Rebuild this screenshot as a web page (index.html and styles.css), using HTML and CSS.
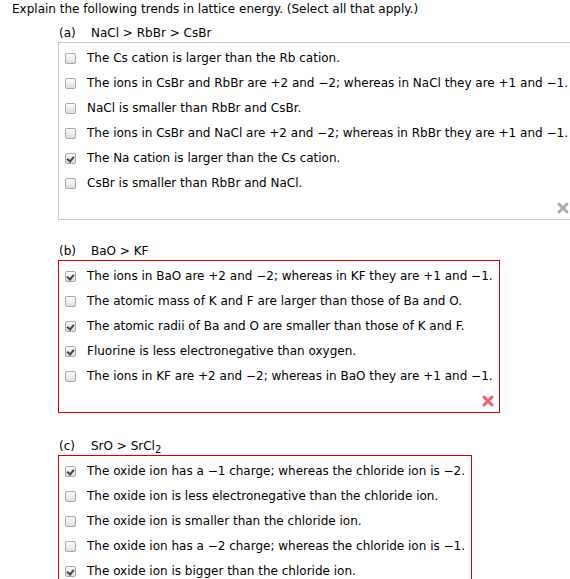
FILE: index.html
```html
<!DOCTYPE html>
<html>
<head>
<meta charset="utf-8">
<link rel="stylesheet" href="styles.css">
</head>
<body>
<div class="page">
  <div class="title">Explain the following trends in lattice energy. (Select all that apply.)</div>

  <div class="part">
    <div class="label"><span class="letter">(a)</span><span>NaCl &gt; RbBr &gt; CsBr</span></div>
    <div class="box neutral">
      <div class="row"><span class="cb"></span><span>The Cs cation is larger than the Rb cation.</span></div>
      <div class="row"><span class="cb"></span><span>The ions in CsBr and RbBr are +2 and &minus;2; whereas in NaCl they are +1 and &minus;1.</span></div>
      <div class="row"><span class="cb"></span><span>NaCl is smaller than RbBr and CsBr.</span></div>
      <div class="row"><span class="cb"></span><span>The ions in CsBr and NaCl are +2 and &minus;2; whereas in RbBr they are +1 and &minus;1.</span></div>
      <div class="row"><span class="cb checked"></span><span>The Na cation is larger than the Cs cation.</span></div>
      <div class="row"><span class="cb"></span><span>CsBr is smaller than RbBr and NaCl.</span></div>
      <div class="foot">
        <svg class="x" viewBox="0 0 12 12" width="12" height="12"><path d="M2 2 L10 10 M10 2 L2 10" stroke="#ababab" stroke-width="3" stroke-linecap="round"/></svg>
      </div>
    </div>
  </div>

  <div class="part pb">
    <div class="label"><span class="letter">(b)</span><span>BaO &gt; KF</span></div>
    <div class="box wrong">
      <div class="row"><span class="cb checked"></span><span>The ions in BaO are +2 and &minus;2; whereas in KF they are +1 and &minus;1.</span></div>
      <div class="row"><span class="cb"></span><span>The atomic mass of K and F are larger than those of Ba and O.</span></div>
      <div class="row"><span class="cb checked"></span><span>The atomic radii of Ba and O are smaller than those of K and F.</span></div>
      <div class="row"><span class="cb checked"></span><span>Fluorine is less electronegative than oxygen.</span></div>
      <div class="row"><span class="cb"></span><span>The ions in KF are +2 and &minus;2; whereas in BaO they are +1 and &minus;1.</span></div>
      <div class="foot">
        <svg class="x" viewBox="0 0 12 12" width="12" height="12"><path d="M2 2 L10 10 M10 2 L2 10" stroke="#f06069" stroke-width="3" stroke-linecap="round"/></svg>
      </div>
    </div>
  </div>

  <div class="part pc">
    <div class="label"><span class="letter">(c)</span><span>SrO &gt; SrCl<sub>2</sub></span></div>
    <div class="box wrong">
      <div class="row"><span class="cb checked"></span><span>The oxide ion has a &minus;1 charge; whereas the chloride ion is &minus;2.</span></div>
      <div class="row"><span class="cb"></span><span>The oxide ion is less electronegative than the chloride ion.</span></div>
      <div class="row"><span class="cb"></span><span>The oxide ion is smaller than the chloride ion.</span></div>
      <div class="row"><span class="cb"></span><span>The oxide ion has a &minus;2 charge; whereas the chloride ion is &minus;1.</span></div>
      <div class="row"><span class="cb checked"></span><span>The oxide ion is bigger than the chloride ion.</span></div>
    </div>
  </div>
</div>
</body>
</html>
```

FILE: styles.css
```css
html, body {
  margin: 0;
  padding: 0;
  background: #fff;
}
body {
  font-family: "DejaVu Sans", Verdana, sans-serif;
  font-size: 12px;
  color: #000;
  overflow: hidden;
  width: 570px;
  height: 579px;
}
.page {
  padding: 1px 0 0 12px;
}
.title {
  line-height: 16px;
  height: 16px;
}
.part {
  margin-left: 46px;
  margin-top: 8px;
}
.pb {
  margin-top: 23px;
}
.pc {
  margin-top: 25px;
}
.label {
  display: flex;
  line-height: 16px;
  height: 16px;
  margin-left: 1px;
  margin-bottom: 1px;
}
.label sub {
  font-size: 10px;
  line-height: 0;
  vertical-align: -3px;
}
.letter {
  width: 32px;
}
.box {
  display: inline-block;
  border: 1px solid #ccc;
  padding: 3px 6px 0 6px;
  white-space: nowrap;
}
.wrong {
  border-color: #d60000;
}
.row {
  display: flex;
  align-items: center;
  height: 25px;
  line-height: 25px;
}
.cb {
  flex: none;
  width: 9px;
  height: 9px;
  border: 1px solid #a8a8a8;
  border-radius: 2px;
  background: linear-gradient(#fdfdfd, #dedede);
  margin-right: 11px;
  position: relative;
}
.cb.checked::after {
  content: "";
  position: absolute;
  left: 2px;
  top: 1px;
  width: 3px;
  height: 5px;
  border-right: 2px solid #444;
  border-bottom: 2px solid #444;
  transform: rotate(40deg);
}
.foot {
  height: 23px;
  display: flex;
  justify-content: flex-end;
  align-items: center;
  margin-right: -1px;
}
.x {
  display: block;
}
```
